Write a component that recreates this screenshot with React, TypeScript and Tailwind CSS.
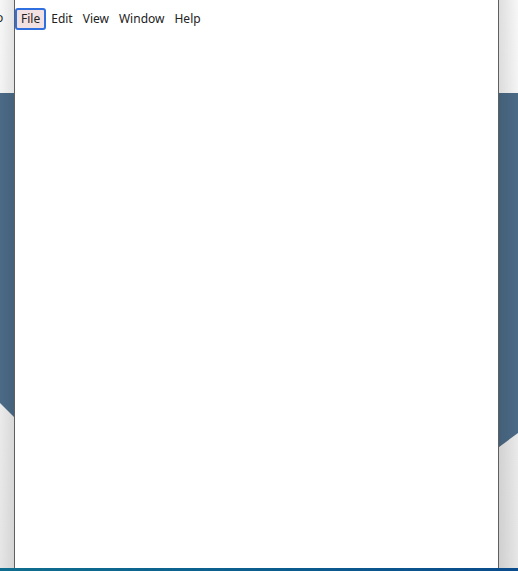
import React from "react";

const items = ["File", "Edit", "View", "Window", "Help"];

export default function App() {
  return (
    <div className="relative w-[518px] h-[571px] overflow-hidden bg-[#f4f4f4]" style={{ fontFamily: '"Noto Sans", "Segoe UI", sans-serif' }}>
      {/* background decoration */}
      <div className="absolute inset-0 bg-gradient-to-b from-[#f7f7f7] to-[#e6e6e6]" />
      <div
        className="absolute left-0 right-0 top-[93px] h-[460px] bg-[#4b6a86]"
        style={{ clipPath: "polygon(0 0, 518px 0, 518px 340px, 237px 547px, 0 310px)" }}
      />
      <div className="absolute left-0 top-0 w-[14px] h-full bg-gradient-to-r from-transparent to-[rgba(0,0,0,0.08)]" />
      <div className="absolute right-0 top-0 w-[19px] h-full bg-gradient-to-l from-transparent to-[rgba(0,0,0,0.1)]" />
      <div className="absolute left-[-4px] top-[10px] text-[12px] text-[#222] leading-[16px]">o</div>
      <div className="absolute left-0 right-0 bottom-0 h-[3px] bg-gradient-to-r from-[#0f6e8f] to-[#0b4c8c]" />

      {/* window */}
      <div className="relative ml-[14px] w-[485px] h-[568px] bg-white border-x border-[#5f5f5f]">
        <div className="flex items-center pt-[8px]">
          {items.map((t, i) => (
            <div
              key={t}
              className={
                i === 0
                  ? "h-[22px] px-[4px] flex items-center text-[12px] text-[#222] bg-[#f3e1e1] border-2 border-[#2f6fe0] rounded-[3px]"
                  : "h-[22px] px-[5px] flex items-center text-[12px] text-[#222]"
              }
            >
              {t}
            </div>
          ))}
        </div>
      </div>
    </div>
  );
}
